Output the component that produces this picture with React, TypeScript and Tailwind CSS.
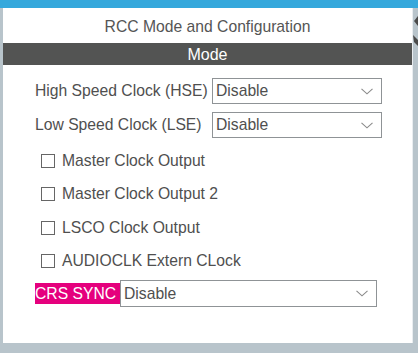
import React from "react";

const font = { fontFamily: '"Liberation Sans", Arial, sans-serif' };

function Chevron() {
  return (
    <svg width="12" height="7" viewBox="0 0 12 7" className="shrink-0">
      <path d="M0.5 0.8 L6 5.8 L11.5 0.8" fill="none" stroke="#8a8a8a" strokeWidth="1.1" />
    </svg>
  );
}

function Select({ w, h, padR }: { w: string; h: string; padR: string }) {
  return (
    <div className={`flex items-center justify-between border border-[#8f9396] bg-white pl-[3px] ${w} ${h} ${padR}`}>
      <span className="text-[15.7px] leading-none text-[#4f4f4f]">Disable</span>
      <Chevron />
    </div>
  );
}

function Check({ label }: { label: string }) {
  return (
    <div className="flex h-[20px] items-center pl-[6px]">
      <div className="h-[14px] w-[14px] shrink-0 border-[1.5px] border-[#666666] bg-white" />
      <span className="ml-[7px] text-[15.7px] leading-none text-[#4f4f4f]">{label}</span>
    </div>
  );
}

export default function App() {
  return (
    <div className="flex h-[353px] w-[418px] flex-col overflow-hidden bg-[#b8c4cb]" style={font}>
      <div className="h-[8px] w-full bg-[#35a8dc]" />
      <div className="flex h-[335px] w-full">
        <div className="w-[3px] bg-[#b8c4cb]" />
        <div className="flex w-[409px] flex-col bg-white">
          <div className="flex h-[35px] items-center justify-center pt-[2px] text-[15.7px] text-[#555555]">
            RCC Mode and Configuration
          </div>
          <div className="flex h-[22px] items-center justify-center bg-[#535453] pt-[2px] text-[16px] text-white">
            Mode
          </div>
          <div className="flex flex-col pl-[32px]">
            <div className="mt-[13px] flex items-center">
              <span className="w-[177px] text-[15.7px] leading-none text-[#4f4f4f]">High Speed Clock (HSE)</span>
              <Select w="w-[170px]" h="h-[26px]" padR="pr-[8px]" />
            </div>
            <div className="mt-[8px] flex items-center">
              <span className="w-[177px] text-[15.7px] leading-none text-[#4f4f4f]">Low Speed Clock (LSE)</span>
              <Select w="w-[170px]" h="h-[26px]" padR="pr-[8px]" />
            </div>
            <div className="mt-[13px]">
              <Check label="Master Clock Output" />
            </div>
            <div className="mt-[13px]">
              <Check label="Master Clock Output 2" />
            </div>
            <div className="mt-[14px]">
              <Check label="LSCO Clock Output" />
            </div>
            <div className="mt-[13px]">
              <Check label="AUDIOCLK Extern CLock" />
            </div>
            <div className="mt-[9px] flex items-center">
              <span className="flex h-[21px] w-[85px] items-center bg-[#e5007d] text-[15.7px] leading-none text-white">
                CRS SYNC
              </span>
              <Select w="w-[257px]" h="h-[27px]" padR="pr-[8px]" />
            </div>
          </div>
        </div>
        <div className="w-[1px] bg-[#e9edf0]" />
        <div className="flex w-[5px] flex-col bg-[#b8c4cb]">
          <svg width="5" height="40" viewBox="0 0 5 40" className="mt-[2px]">
            <path d="M5 6 L1 11 L5 16 Z" fill="#4a4a4a" />
            <path d="M0 25 L5 30 L5 36 L1 32 Z" fill="#4a4a4a" />
          </svg>
        </div>
      </div>
      <div className="h-[10px] w-full bg-[#b8c4cb]" />
    </div>
  );
}
